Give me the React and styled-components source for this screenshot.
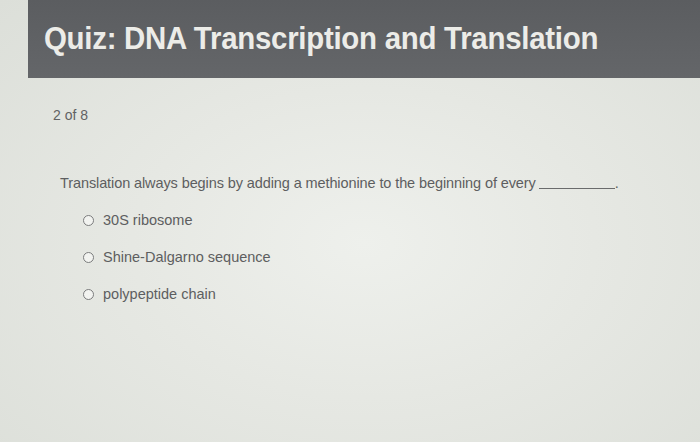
import React from 'react';
import styled, { createGlobalStyle } from 'styled-components';

const GlobalStyles = createGlobalStyle`
  html, body {
    margin: 0;
    padding: 0;
    height: 100%;
    overflow: hidden;
  }
  body {
    font-family: 'Liberation Sans Narrow', 'Liberation Sans', Arial, sans-serif;
    background: #e2e4df;
  }
`;

const Page = styled.div`
  width: 700px;
  height: 442px;
  background: radial-gradient(ellipse at 52% 55%, #eef0ec 0%, #e6e8e3 45%, #dcdfd9 100%);
  padding-left: 28px;
  box-sizing: border-box;
`;

const Header = styled.header`
  height: 78px;
  background: linear-gradient(180deg, #5b5d60 0%, #646669 100%);
  display: flex;
  align-items: center;
  padding-left: 16px;
  overflow: hidden;
`;

const Title = styled.h1`
  margin: 0;
  margin-top: -1px;
  font-family: 'Liberation Sans Narrow', 'Liberation Sans', Arial, sans-serif;
  font-weight: 700;
  font-size: 32px;
  color: #ecece8;
  letter-spacing: -0.3px;
  white-space: nowrap;
  transform: scaleX(0.92);
  transform-origin: left center;
`;

const Body = styled.main`
  padding: 29px 0 0 25px;
  color: #5e5f60;
`;

const Counter = styled.div`
  font-size: 14px;
  color: #616263;
`;

const Question = styled.p`
  margin: 52px 0 0 7px;
  font-size: 14.5px;
  color: #5d5e60;
  letter-spacing: -0.1px;
`;

const Blank = styled.span`
  display: inline-block;
  width: 76px;
  border-bottom: 1px solid #6a6b6c;
  margin-left: 3px;
  vertical-align: -1px;
`;

const Options = styled.ul`
  list-style: none;
  margin: 20px 0 0 30px;
  padding: 0;
  display: flex;
  flex-direction: column;
  gap: 19px;
`;

const Option = styled.li`
  display: flex;
  align-items: center;
  gap: 9px;
  font-size: 14.5px;
  color: #5d5e60;
  height: 18px;
`;

const Radio = styled.span`
  width: 9px;
  height: 9px;
  border-radius: 50%;
  border: 1.4px solid #7b7c7d;
  background: #f2f3f0;
  flex: none;
`;

const answers = ['30S ribosome', 'Shine-Dalgarno sequence', 'polypeptide chain'];

const App = () => (
  <Page>
    <GlobalStyles />
    <Header>
      <Title>Quiz: DNA Transcription and Translation</Title>
    </Header>
    <Body>
      <Counter>2 of 8</Counter>
      <Question>
        Translation always begins by adding a methionine to the beginning of every<Blank />.
      </Question>
      <Options>
        {answers.map((a) => (
          <Option key={a}>
            <Radio />
            {a}
          </Option>
        ))}
      </Options>
    </Body>
  </Page>
);

export default App;
